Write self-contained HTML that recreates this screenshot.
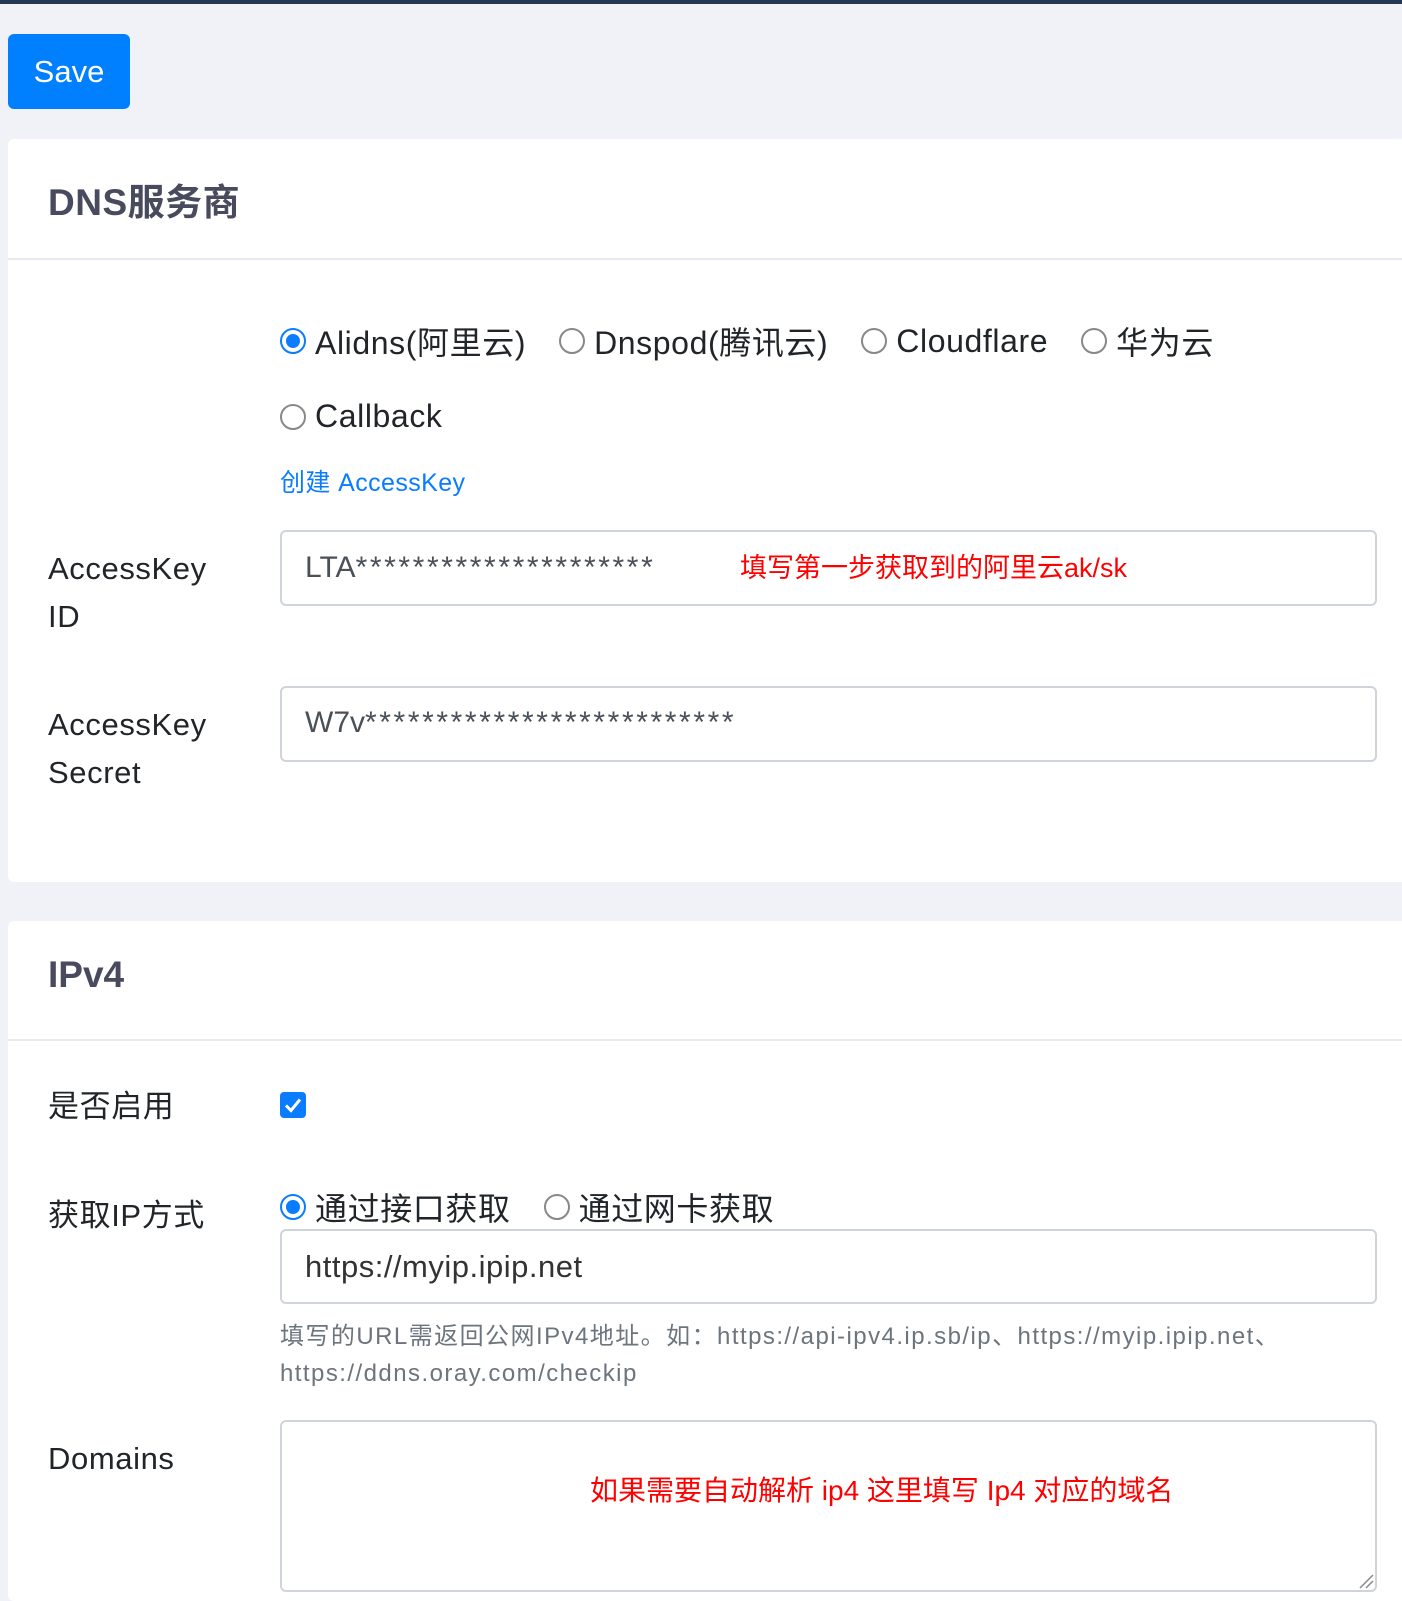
<!DOCTYPE html>
<html><head><meta charset="utf-8"><style>
*{box-sizing:border-box;margin:0;padding:0}
body{width:1402px;height:1596px;overflow:hidden;background:#f1f2f7;font-family:"Liberation Sans","Noto Sans CJK SC",sans-serif;color:#212529;position:relative}
.abs{position:absolute;white-space:nowrap}
.bar{position:absolute;left:0;top:0;width:1402px;height:4px;background:#243757}
.btn{position:absolute;left:8px;top:34px;width:122px;height:75px;background:#0080ff;border-radius:6px;color:#fff;font-size:31px;line-height:75px;text-align:center}
.card{position:absolute;left:8px;width:1394px;background:#fff;border-radius:6px 0 0 6px}
.hd{font-size:37px;font-weight:bold;color:#484a5e}
.div{position:absolute;left:8px;width:1394px;height:2px;background:#e9eaf0}
.lbl{font-size:31px;line-height:48px;color:#212529;letter-spacing:0.6px}
.inp{position:absolute;left:280px;width:1097px;border:2px solid #ced4da;border-radius:6px;background:#fff}
.it{font-size:30px;color:#495057}
.ast{letter-spacing:2.6px}
.radio{display:inline-block;width:26px;height:26px;border:2px solid #888;border-radius:50%;vertical-align:middle;position:relative;background:#fff}
.radio.on{border-color:#0a7cff}
.radio.on::after{content:"";position:absolute;left:4px;top:4px;width:14px;height:14px;border-radius:50%;background:#0a7cff}
.rt{font-size:32px;vertical-align:middle;margin-left:9px;margin-right:33px;letter-spacing:0.6px}
.red{color:#f00;font-size:26px}
</style></head><body>
<div class="bar"></div>
<div class="btn">Save</div>
<div class="card" style="top:139px;height:743px"></div>
<div class="abs hd" style="left:48px;top:172px;letter-spacing:0.5px">DNS服务商</div>
<div class="div" style="top:258px"></div>
<div class="abs" style="left:280px;top:318px"><span class="radio on"></span><span class="rt">Alidns(阿里云)</span><span class="radio"></span><span class="rt">Dnspod(腾讯云)</span><span class="radio"></span><span class="rt">Cloudflare</span><span class="radio"></span><span class="rt">华为云</span></div>
<div class="abs" style="left:280px;top:398px"><span class="radio"></span><span class="rt">Callback</span></div>
<div class="abs" style="left:280px;top:463px;font-size:25px;color:#0a7cff;letter-spacing:0.4px">创建 AccessKey</div>
<div class="abs lbl" style="left:48px;top:545px">AccessKey<br>ID</div>
<div class="inp" style="top:530px;height:76px"></div>
<div class="abs it" style="left:305px;top:551px">LTA<span class="ast">*********************</span></div>
<div class="abs red" style="left:740px;top:546px;font-size:27px">填写第一步获取到的阿里云ak/sk</div>
<div class="abs lbl" style="left:48px;top:701px">AccessKey<br>Secret</div>
<div class="inp" style="top:686px;height:76px"></div>
<div class="abs it" style="left:305px;top:706px">W7v<span class="ast">**************************</span></div>
<div class="card" style="top:921px;height:680px"></div>
<div class="abs hd" style="left:48px;top:954px">IPv4</div>
<div class="div" style="top:1039px"></div>
<div class="abs lbl" style="left:48px;top:1083px">是否启用</div>
<div class="abs" style="left:280px;top:1092px;width:26px;height:26px;background:#0a7cff;border-radius:4px"><svg width="26" height="26" viewBox="0 0 26 26"><path d="M6 13.5l5 5 9-11" fill="none" stroke="#fff" stroke-width="3"/></svg></div>
<div class="abs lbl" style="left:48px;top:1192px">获取IP方式</div>
<div class="abs" style="left:280px;top:1184px"><span class="radio on"></span><span class="rt">通过接口获取</span><span class="radio"></span><span class="rt">通过网卡获取</span></div>
<div class="inp" style="top:1229px;height:75px"></div>
<div class="abs it" style="left:305px;top:1249px;color:#333;font-size:31px;letter-spacing:0.5px">https://myip.ipip.net</div>
<div class="abs" style="left:280px;top:1318px;font-size:24px;color:#6c757d;line-height:37px;letter-spacing:1.45px">填写的URL需返回公网IPv4地址。如：https://api-ipv4.ip.sb/ip、https://myip.ipip.net、<br>https://ddns.oray.com/checkip</div>
<div class="abs lbl" style="left:48px;top:1435px">Domains</div>
<div class="inp" style="top:1420px;height:172px"></div>
<svg class="abs" style="left:1358px;top:1573px" width="16" height="16" viewBox="0 0 16 16"><path d="M2 15L15 2M8 15L15 8" stroke="#888" stroke-width="1.5"/></svg>
<div class="abs red" style="left:590px;top:1469px;font-size:28px">如果需要自动解析 ip4 这里填写 Ip4 对应的域名</div>
</body></html>
